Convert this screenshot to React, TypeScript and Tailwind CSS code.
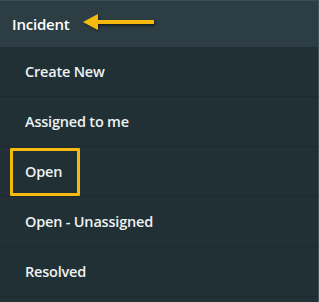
import React from 'react';

const items = ['Create New', 'Assigned to me', 'Open', 'Open - Unassigned', 'Resolved'];

function ArrowLeft() {
  return (
    <svg width="80" height="24" viewBox="0 0 80 24" className="absolute left-[80px] top-[9px]">
      <defs>
        <filter id="sh" x="-20%" y="-50%" width="140%" height="200%">
          <feDropShadow dx="1" dy="1.5" stdDeviation="1" floodColor="#000" floodOpacity="0.6" />
        </filter>
      </defs>
      <g filter="url(#sh)">
        <path d="M3 12 L18 4 L18 10 L74 10 L74 14 L18 14 L18 20 Z" fill="#f6b90f" />
      </g>
    </svg>
  );
}

export default function App() {
  return (
    <div
      className="relative w-[319px] h-[302px] bg-[#213035] overflow-hidden border-r border-[#3e5358]"
      style={{ fontFamily: '"Open Sans", "Liberation Sans", sans-serif' }}
    >
      <div className="relative h-[47px] bg-[#2c3e43] border-t border-[#3b4e53] flex items-center pl-3">
        <span className="text-[15px] font-semibold text-white tracking-[-0.2px]">Incident</span>
        <ArrowLeft />
      </div>
      {items.map((label) => (
        <div
          key={label}
          className="relative h-[50px] flex items-center pl-[25px] border-b border-[#1c292d]"
        >
          <span className="text-[14.5px] font-semibold text-[#eef2f2] tracking-[-0.2px]">{label}</span>
          {label === 'Open' && (
            <div className="absolute left-[10px] top-[1px] w-[70px] h-[48px] border-[3px] border-[#f6b90f] rounded-[1px]" />
          )}
        </div>
      ))}
    </div>
  );
}
